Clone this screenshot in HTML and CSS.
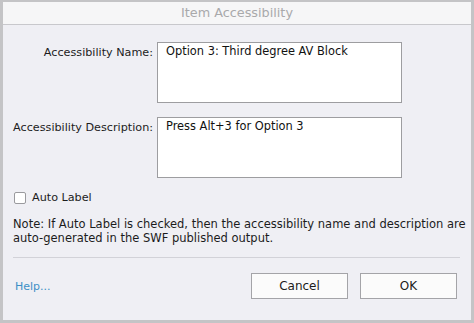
FILE: index.html
```html
<!DOCTYPE html>
<html lang="en">
<head>
    <meta charset="UTF-8">
    <meta name="viewport" content="width=device-width, initial-scale=1.0">
    <title>Item Accessibility</title>
    <link rel="stylesheet" href="styles.css">
</head>
<body>
    <div class="window">
        <div class="titlebar">Item Accessibility</div>

        <div class="content">
            <div class="fields">
                <label class="field-label" for="accName">Accessibility Name:</label>
                <div class="textbox" id="accName">Option 3: Third degree AV Block</div>

                <label class="field-label" for="accDesc">Accessibility Description:</label>
                <div class="textbox" id="accDesc">Press Alt+3 for Option 3</div>
            </div>

            <label class="check-row">
                <span class="checkbox"></span>
                Auto Label
            </label>

            <p class="note">Note: If Auto Label is checked, then the accessibility name and description are auto-generated in the SWF published output.</p>

            <div class="footer">
                <a href="#" class="help">Help...</a>
                <div class="buttons">
                    <button>Cancel</button>
                    <button>OK</button>
                </div>
            </div>
        </div>
    </div>
</body>
</html>
```

FILE: styles.css
```css
body {
    margin: 0;
    padding: 0;
    background: #c4c4c6;
    font-family: "DejaVu Sans", sans-serif;
    font-size: 11px;
    color: #1c1c1c;
}
.window {
    margin: 2px 3px 0 3px;
    height: 318px;
    background: #efeff4;
}
.titlebar {
    height: 22px;
    line-height: 22px;
    text-align: center;
    background: #f6f6f7;
    border-bottom: 1px solid #c8c8cc;
    color: #a9a9ab;
    font-size: 12.8px;
}
.content {
    padding-top: 17px;
}
.fields {
    display: grid;
    grid-template-columns: 150px 245px;
    grid-template-rows: 61px 61px;
    column-gap: 4px;
    row-gap: 14px;
}
.field-label {
    text-align: right;
    padding-top: 4px;
    line-height: 14px;
    font-size: 11.2px;
}
.textbox {
    box-sizing: border-box;
    background: #fff;
    border: 1px solid #9d9da0;
    padding: 1px 8px;
    font-size: 11.4px;
    line-height: 15px;
    color: #111;
}
.check-row {
    display: flex;
    align-items: center;
    gap: 6px;
    height: 14px;
    line-height: 14px;
    margin: 13px 0 0 11px;
    font-size: 11.2px;
}
.checkbox {
    width: 10px;
    height: 10px;
    background: #fff;
    border: 1px solid #9a9a9e;
    border-radius: 2px;
}
.note {
    margin: 12px 0 0 10px;
    line-height: 14px;
    font-size: 11.5px;
}
.footer {
    display: flex;
    justify-content: space-between;
    align-items: center;
    margin: 12px 11px 0 10px;
    padding: 15px 0 0 2px;
    border-top: 1px solid #d2d2d8;
}
.help {
    color: #3d8fc6;
    text-decoration: none;
}
.buttons {
    display: flex;
    gap: 12px;
    margin-right: 3px;
}
.buttons button {
    width: 97px;
    height: 26px;
    background: #fbfbfb;
    border: 1px solid #a4a4a8;
    border-radius: 0;
    font-family: "DejaVu Sans", sans-serif;
    font-size: 12px;
    color: #1c1c1c;
    padding: 0;
}
```
